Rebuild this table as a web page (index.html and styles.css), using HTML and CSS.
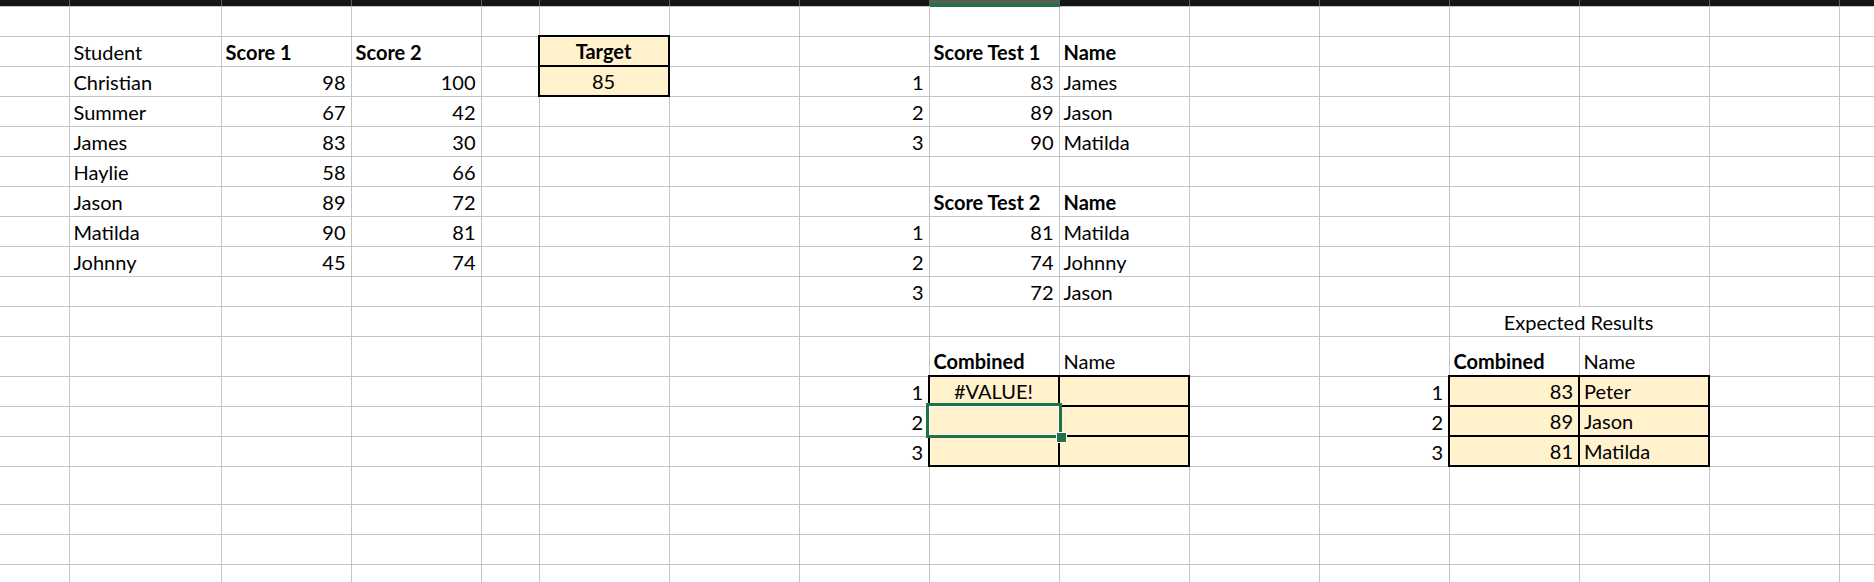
FILE: index.html
```html
<!DOCTYPE html>
<html>
<head>
<meta charset="utf-8">
<link rel="stylesheet" href="styles.css">
</head>
<body>
<table class="sheet">
<colgroup>
<col class="w69"><col class="w152"><col class="w130"><col class="w130"><col class="w58"><col class="w130"><col class="w130"><col class="w130"><col class="w130"><col class="w130"><col class="w130"><col class="w130"><col class="w130"><col class="w130"><col class="w130"><col class="w35">
</colgroup>
<tr class="hdr"><td></td><td></td><td></td><td></td><td></td><td></td><td></td><td></td><td class="on"></td><td></td><td></td><td></td><td></td><td></td><td></td><td></td></tr>
<tr><td></td><td></td><td></td><td></td><td></td><td></td><td></td><td></td><td></td><td></td><td></td><td></td><td></td><td></td><td></td><td></td></tr>
<tr><td></td><td>Student</td><td class="b">Score 1</td><td class="b">Score 2</td><td></td><td class="y c b">Target</td><td></td><td></td><td class="b">Score Test 1</td><td class="b">Name</td><td></td><td></td><td></td><td></td><td></td><td></td></tr>
<tr><td></td><td>Christian</td><td class="r">98</td><td class="r">100</td><td></td><td class="y c">85</td><td></td><td class="r">1</td><td class="r">83</td><td>James</td><td></td><td></td><td></td><td></td><td></td><td></td></tr>
<tr><td></td><td>Summer</td><td class="r">67</td><td class="r">42</td><td></td><td></td><td></td><td class="r">2</td><td class="r">89</td><td>Jason</td><td></td><td></td><td></td><td></td><td></td><td></td></tr>
<tr><td></td><td>James</td><td class="r">83</td><td class="r">30</td><td></td><td></td><td></td><td class="r">3</td><td class="r">90</td><td>Matilda</td><td></td><td></td><td></td><td></td><td></td><td></td></tr>
<tr><td></td><td>Haylie</td><td class="r">58</td><td class="r">66</td><td></td><td></td><td></td><td></td><td></td><td></td><td></td><td></td><td></td><td></td><td></td><td></td></tr>
<tr><td></td><td>Jason</td><td class="r">89</td><td class="r">72</td><td></td><td></td><td></td><td></td><td class="b">Score Test 2</td><td class="b">Name</td><td></td><td></td><td></td><td></td><td></td><td></td></tr>
<tr><td></td><td>Matilda</td><td class="r">90</td><td class="r">81</td><td></td><td></td><td></td><td class="r">1</td><td class="r">81</td><td>Matilda</td><td></td><td></td><td></td><td></td><td></td><td></td></tr>
<tr><td></td><td>Johnny</td><td class="r">45</td><td class="r">74</td><td></td><td></td><td></td><td class="r">2</td><td class="r">74</td><td>Johnny</td><td></td><td></td><td></td><td></td><td></td><td></td></tr>
<tr><td></td><td></td><td></td><td></td><td></td><td></td><td></td><td class="r">3</td><td class="r">72</td><td>Jason</td><td></td><td></td><td></td><td></td><td></td><td></td></tr>
<tr><td></td><td></td><td></td><td></td><td></td><td></td><td></td><td></td><td></td><td></td><td></td><td></td><td class="c" colspan="2">Expected Results</td><td></td><td></td></tr>
<tr class="tall"><td></td><td></td><td></td><td></td><td></td><td></td><td></td><td></td><td class="b">Combined</td><td>Name</td><td></td><td></td><td class="b">Combined</td><td>Name</td><td></td><td></td></tr>
<tr><td></td><td></td><td></td><td></td><td></td><td></td><td></td><td class="r">1</td><td class="y c">#VALUE!</td><td class="y"></td><td></td><td class="r">1</td><td class="y r">83</td><td class="y">Peter</td><td></td><td></td></tr>
<tr><td></td><td></td><td></td><td></td><td></td><td></td><td></td><td class="r">2</td><td class="y sel"><div class="frame"><div class="handle"></div></div></td><td class="y"></td><td></td><td class="r">2</td><td class="y r">89</td><td class="y">Jason</td><td></td><td></td></tr>
<tr><td></td><td></td><td></td><td></td><td></td><td></td><td></td><td class="r">3</td><td class="y"></td><td class="y"></td><td></td><td class="r">3</td><td class="y r">81</td><td class="y">Matilda</td><td></td><td></td></tr>
<tr class="mid"><td></td><td></td><td></td><td></td><td></td><td></td><td></td><td></td><td></td><td></td><td></td><td></td><td></td><td></td><td></td><td></td></tr>
<tr><td></td><td></td><td></td><td></td><td></td><td></td><td></td><td></td><td></td><td></td><td></td><td></td><td></td><td></td><td></td><td></td></tr>
<tr><td></td><td></td><td></td><td></td><td></td><td></td><td></td><td></td><td></td><td></td><td></td><td></td><td></td><td></td><td></td><td></td></tr>
<tr><td></td><td></td><td></td><td></td><td></td><td></td><td></td><td></td><td></td><td></td><td></td><td></td><td></td><td></td><td></td><td></td></tr>
</table>
</body>
</html>
```

FILE: styles.css
```css
html, body {
  margin: 0;
  padding: 0;
  background: #ffffff;
  overflow: hidden;
}

.sheet {
  border-collapse: collapse;
  table-layout: fixed;
  width: 1874px;
  font-family: Lato, "Noto Sans", sans-serif;
  font-size: 20px;
  color: #000;
}

.w69 { width: 69px; }
.w152 { width: 152px; }
.w130 { width: 130px; }
.w58 { width: 58px; }
.w35 { width: 35px; }

.sheet tr { height: 30px; }
.sheet tr.tall { height: 40px; }
.sheet tr.mid { height: 38px; }

.sheet td {
  border: 1px solid #c4c4c4;
  padding: 0 5px 4px 4px;
  line-height: 20px;
  vertical-align: bottom;
  white-space: nowrap;
  overflow: visible;
}

.sheet tr td:first-child { border-left: none; }

.sheet tr.hdr { height: 6px; }
.sheet tr.hdr td {
  background: #161616;
  border-top: none;
  border-left-color: #5a5a5a;
  border-right-color: #5a5a5a;
  padding: 0;
  line-height: 0;
}
.sheet tr.hdr td.on {
  background: linear-gradient(#5b5b5b 0 3px, #217346 3px);
  border-bottom-color: #217346;
}

.r { text-align: right; }
.c { text-align: center; }
.b { font-weight: 700; }

.sheet td.y {
  background: #fff2cc;
  border: 2px solid #000;
}

.sheet td.sel { position: relative; }

.frame {
  position: absolute;
  left: -4px;
  right: -4px;
  top: -4px;
  bottom: -3px;
  border: 3px solid #217346;
  box-shadow: inset 0 0 0 1px #ffffff;
}

.handle {
  position: absolute;
  right: -8px;
  bottom: -8px;
  width: 9px;
  height: 9px;
  background: #217346;
  border: 1px solid #ffffff;
}
```
